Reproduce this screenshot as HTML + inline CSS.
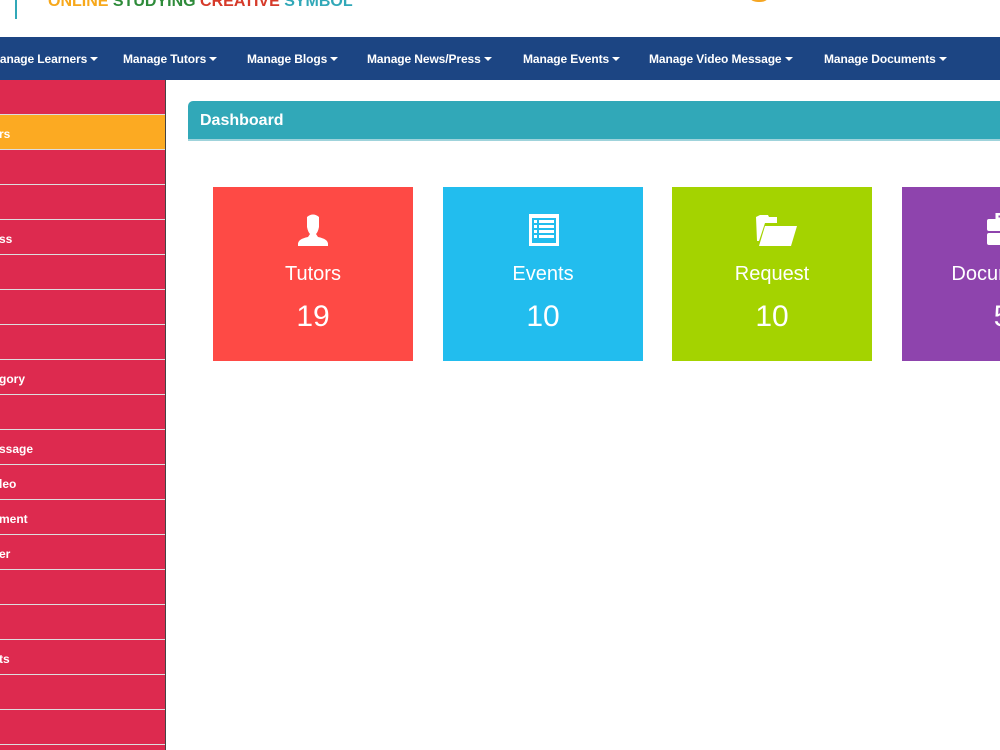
<!DOCTYPE html>
<html><head><meta charset="utf-8"><style>
*{margin:0;padding:0;box-sizing:border-box}
body{width:1000px;height:750px;overflow:hidden;background:#fff;font-family:"Liberation Sans",Arial,sans-serif;position:relative}
.logo{position:absolute;left:48px;top:-7px;font-size:16px;font-weight:bold;white-space:nowrap;letter-spacing:0px}
.vline{position:absolute;left:15px;top:0;width:2px;height:19px;background:#31a8b8}
.sun{position:absolute;left:746px;top:-10px;width:26px;height:12px;border-radius:0 0 13px 13px;background:#f5a623}
.nav{position:absolute;left:0;top:37px;width:1000px;height:43px;background:#1c4583}
.nav span{position:absolute;top:15px;color:#fff;font-size:12px;font-weight:bold;white-space:nowrap;letter-spacing:-0.1px}
.nav span:after{content:"";display:inline-block;margin-left:3px;vertical-align:2px;border-left:4px solid transparent;border-right:4px solid transparent;border-top:4px solid #fff}
.side{position:absolute;left:0;top:80px;width:166px;height:670px;background:#dd2a4f;border-right:1px solid #444}
.row{position:absolute;left:0;width:165px;height:35px;border-bottom:1px solid #ddd}
.row span{position:absolute;left:-1px;top:12px;color:#fff;font-size:12px;font-weight:bold}
.dash{position:absolute;left:188px;top:101px;width:812px;height:40px;background:#31a8b8;border-radius:5px 0 0 0;border-bottom:2px solid #9fd3db}
.dash span{position:absolute;left:12px;top:11px;color:#fff;font-size:16px;font-weight:bold}
.card{position:absolute;top:187px;width:200px;height:174px;color:#fff;text-align:center}
.card svg{position:absolute;left:83px;top:26px}
.card .t{position:absolute;left:0;width:200px;top:76px;font-size:20px}
.card .n{position:absolute;left:0;width:200px;top:113px;font-size:30px}
</style></head><body>
<div class="vline"></div>
<div class="logo"><span style="color:#f7a81b">ONLINE</span> <span style="color:#2e8b3a">STUDYING</span> <span style="color:#d63a2a">CREATIVE</span> <span style="color:#31a8b8">SYMBOL</span></div>
<div class="sun"></div>
<div class="nav">
<span style="left:-10px">Manage Learners</span>
<span style="left:123px">Manage Tutors</span>
<span style="left:247px">Manage Blogs</span>
<span style="left:367px">Manage News/Press</span>
<span style="left:523px">Manage Events</span>
<span style="left:649px">Manage Video Message</span>
<span style="left:824px">Manage Documents</span>
</div>
<div class="side">
<div class="row" style="top:0"></div>
<div class="row" style="top:35px;background:#fcaa22"><span>rs</span></div>
<div class="row" style="top:70px"></div>
<div class="row" style="top:105px"></div>
<div class="row" style="top:140px"><span>ss</span></div>
<div class="row" style="top:175px"></div>
<div class="row" style="top:210px"></div>
<div class="row" style="top:245px"></div>
<div class="row" style="top:280px"><span>gory</span></div>
<div class="row" style="top:315px"></div>
<div class="row" style="top:350px"><span>ssage</span></div>
<div class="row" style="top:385px"><span>leo</span></div>
<div class="row" style="top:420px"><span>ment</span></div>
<div class="row" style="top:455px"><span>er</span></div>
<div class="row" style="top:490px"></div>
<div class="row" style="top:525px"></div>
<div class="row" style="top:560px"><span>ts</span></div>
<div class="row" style="top:595px"></div>
<div class="row" style="top:630px"></div>
</div>
<div class="dash"><span>Dashboard</span></div>
<div class="card" style="left:213px;background:#fe4a45">
<svg width="34" height="34" viewBox="0 0 34 34"><path d="M11 4 Q17 -1 23 4 L23 14 Q22 19 20 21 L22 24 Q32 26 32 31 L32 33 L2 33 L2 31 Q2 26 12 24 L14 21 Q12 19 11 14 Z" fill="#fff"/></svg>
<div class="t">Tutors</div><div class="n">19</div></div>
<div class="card" style="left:443px;background:#22bdee">
<svg width="34" height="34" viewBox="0 0 34 34"><rect x="3" y="1" width="30" height="32" fill="#fff"/><rect x="6" y="5" width="24" height="25" fill="#22bdee"/><g fill="#fff"><rect x="8" y="7" width="3" height="3"/><rect x="13" y="7" width="15" height="3"/><rect x="8" y="12" width="3" height="3"/><rect x="13" y="12" width="15" height="3"/><rect x="8" y="17" width="3" height="3"/><rect x="13" y="17" width="15" height="3"/><rect x="8" y="22" width="3" height="3"/><rect x="13" y="22" width="15" height="3"/></g></svg>
<div class="t">Events</div><div class="n">10</div></div>
<div class="card" style="left:672px;background:#a4d300">
<svg width="44" height="34" viewBox="0 0 44 34"><path d="M1 4 L5 2 L13 2 L14 4 L22 4 L22 10 L10 10 L4 28 L2 28 Z" fill="#fff"/><path d="M10 13 L42 13 L36 33 L4 33 Z" fill="#fff"/></svg>
<div class="t">Request</div><div class="n">10</div></div>
<div class="card" style="left:902px;background:#8e44ad">
<svg width="34" height="34" viewBox="0 0 34 34"><rect x="12" y="1" width="10" height="5" fill="none" stroke="#fff" stroke-width="3"/><rect x="2" y="6" width="30" height="12" rx="2" fill="#fff"/><rect x="2" y="20" width="30" height="12" rx="2" fill="#fff"/></svg>
<div class="t">Documents</div><div class="n">5</div></div>
</body></html>
